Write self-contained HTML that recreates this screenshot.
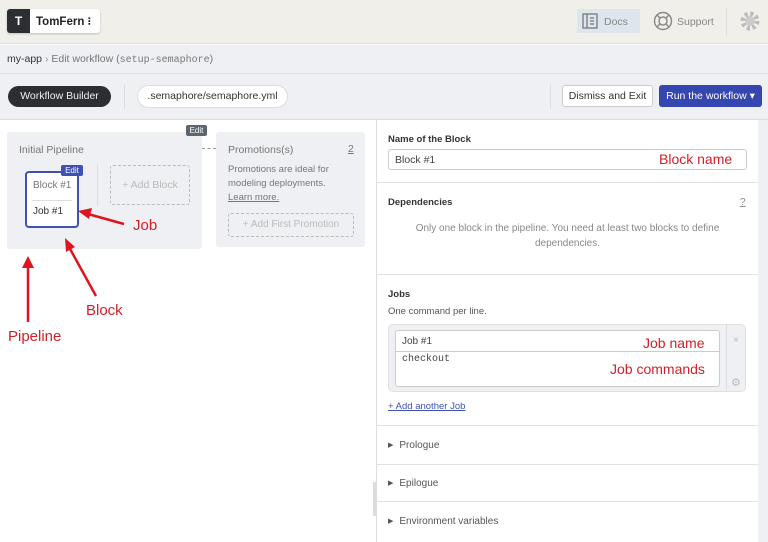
<!DOCTYPE html>
<html><head><style>
*{box-sizing:border-box;margin:0;padding:0}
body{width:768px;height:542px;overflow:hidden;font-family:"Liberation Sans",sans-serif;font-size:11px;color:#333;background:#fff;position:relative}
.a{position:absolute}
.red{color:#d32027;font-family:"Liberation Sans",sans-serif}
.sec{position:absolute;left:376px;width:382px;border-bottom:1px solid #e2e2e2}
.lbl{font-weight:bold;font-size:9.5px;color:#333}
.tri{font-size:7px;margin-right:6px;vertical-align:1px}
</style></head><body>
<div class="a" style="left:0;top:0;width:768px;height:44px;background:#f0efea;border-bottom:1px solid #dcdcdc"></div>
<div class="a" style="left:7px;top:9px;width:93px;height:24px;background:#fff;border-radius:3px;box-shadow:0 1px 2px rgba(0,0,0,.2);overflow:hidden">
 <div class="a" style="left:0;top:0;width:23px;height:24px;background:#2b2e33;color:#fff;font-weight:bold;font-size:12px;text-align:center;line-height:24px">T</div>
 <div class="a" style="left:29px;top:5px;font-weight:bold;font-size:11.5px;color:#222">TomFern ⁝</div>
</div>
<div class="a" style="left:577px;top:9px;width:63px;height:24px;background:#dce6ec"></div>
<svg class="a" style="left:581px;top:12px" width="18" height="18" viewBox="0 0 18 18" fill="none" stroke="#777" stroke-width="1.3"><rect x="2" y="2" width="14" height="14"/><line x1="6" y1="2" x2="6" y2="16"/><line x1="9" y1="6" x2="13" y2="6"/><line x1="9" y1="9" x2="13" y2="9"/><line x1="9" y1="12" x2="13" y2="12"/></svg>
<div class="a" style="left:604px;top:16px;color:#888;font-size:10.5px">Docs</div>
<svg class="a" style="left:653px;top:11px" width="20" height="20" viewBox="0 0 20 20" fill="none" stroke="#888" stroke-width="1.4"><circle cx="10" cy="10" r="8.5"/><circle cx="10" cy="10" r="4"/><line x1="4" y1="4" x2="7" y2="7"/><line x1="16" y1="4" x2="13" y2="7"/><line x1="4" y1="16" x2="7" y2="13"/><line x1="16" y1="16" x2="13" y2="13"/></svg>
<div class="a" style="left:677px;top:16px;color:#888;font-size:10.5px">Support</div>
<div class="a" style="left:726px;top:8px;width:1px;height:28px;background:#ddd"></div>
<svg class="a" style="left:738px;top:9px" width="24" height="24" viewBox="0 0 24 24"><circle cx="12" cy="12" r="7" fill="none" stroke="#bbb" stroke-width="5" stroke-dasharray="3 2.5"/><circle cx="12" cy="12" r="5" fill="#ccc"/></svg>
<div class="a" style="left:0;top:45px;width:768px;height:29px;background:#eef0f3;border-bottom:1px solid #dde"></div>
<div class="a" style="left:7px;top:53px;font-size:10.5px;color:#333">my-app <span style="color:#999">›</span> <span style="color:#777">Edit workflow (<span style="font-family:'Liberation Mono',monospace;font-size:10px">setup-semaphore</span>)</span></div>
<div class="a" style="left:0;top:74px;width:768px;height:46px;background:#eef0f3;border-bottom:1px solid #dcdcdc"></div>
<div class="a" style="left:8px;top:86px;width:103px;height:21px;background:#2b2f33;border-radius:11px;color:#eee;font-size:10.5px;text-align:center;line-height:21px">Workflow Builder</div>
<div class="a" style="left:124px;top:84px;width:1px;height:25px;background:#ddd"></div>
<div class="a" style="left:137px;top:85px;width:151px;height:23px;background:#fff;border:1px solid #ddd;border-radius:12px;font-size:10.5px;text-align:center;line-height:21px;color:#333">.semaphore/semaphore.yml</div>
<div class="a" style="left:550px;top:84px;width:1px;height:25px;background:#ddd"></div>
<div class="a" style="left:562px;top:85px;width:91px;height:22px;background:#fff;border:1px solid #ccc;border-radius:3px;font-size:10.5px;text-align:center;line-height:20px">Dismiss and Exit</div>
<div class="a" style="left:659px;top:85px;width:103px;height:22px;background:#3546b0;border-radius:3px;color:#fff;font-size:10.5px;text-align:center;line-height:22px">Run the workflow ▾</div>
<div class="a" style="left:7px;top:132px;width:195px;height:117px;background:#eef0f3;border-radius:3px"></div>
<div class="a" style="left:186px;top:125px;width:21px;height:11px;background:#5d666e;color:#fff;font-size:8px;text-align:center;line-height:11px;border-radius:2px">Edit</div>
<div class="a" style="left:19px;top:144px;color:#777;font-size:10.5px">Initial Pipeline</div>
<div class="a" style="left:25px;top:171px;width:54px;height:57px;background:#fff;border:2px solid #3f51b5;border-radius:4px">
 <div class="a" style="left:6px;top:7px;color:#777;font-size:10px">Block #1</div>
 <div class="a" style="left:5px;top:27px;width:40px;height:1px;background:#ddd"></div>
 <div class="a" style="left:6px;top:33px;color:#333;font-size:10px">Job #1</div>
</div>
<div class="a" style="left:61px;top:165px;width:22px;height:11px;background:#3f51b5;color:#fff;font-size:8px;text-align:center;line-height:11px;border-radius:2px">Edit</div>
<div class="a" style="left:97px;top:164px;width:1px;height:42px;background:#ddd"></div>
<div class="a" style="left:110px;top:165px;width:80px;height:40px;border:1px dashed #bbb;border-radius:3px;color:#bbb;font-size:10.5px;text-align:center;line-height:38px">+ Add Block</div>
<div class="a" style="left:202px;top:148px;width:14px;border-top:1px dashed #999"></div>
<div class="a" style="left:216px;top:132px;width:149px;height:115px;background:#eef0f3;border-radius:3px"></div>
<div class="a" style="left:228px;top:144px;color:#777;font-size:10.5px">Promotions(s)</div>
<div class="a" style="left:348px;top:143px;color:#777;font-size:10.5px;text-decoration:underline">2</div>
<div class="a" style="left:228px;top:163px;width:112px;color:#777;font-size:9.5px;line-height:14px">Promotions are ideal for modeling deployments.<br><span style="text-decoration:underline">Learn more.</span></div>
<div class="a" style="left:228px;top:213px;width:126px;height:24px;border:1px dashed #bbb;border-radius:3px;color:#bbb;font-size:10px;text-align:center;line-height:22px">+ Add First Promotion</div>
<svg class="a" style="left:0;top:0" width="376" height="542">
<g stroke="#e0141e" stroke-width="2.5" fill="#e0141e">
<line x1="124" y1="224" x2="88" y2="214"/><polygon points="78,211 92,208 89,219" stroke="none"/>
<line x1="96" y1="296" x2="69" y2="247"/><polygon points="65,238 75,247 66,252" stroke="none"/>
<line x1="28" y1="322" x2="28" y2="266"/><polygon points="28,256 34,268 22,268" stroke="none"/>
</g></svg>
<div class="a red" style="left:133px;top:217px;font-size:15px">Job</div>
<div class="a red" style="left:86px;top:302px;font-size:15px">Block</div>
<div class="a red" style="left:8px;top:328px;font-size:15px">Pipeline</div>
<div class="a" style="left:376px;top:120px;width:1px;height:422px;background:#ddd"></div>
<div class="a" style="left:758px;top:120px;width:10px;height:422px;background:#eef0f3"></div>
<div class="a" style="left:373px;top:482px;width:4px;height:34px;background:#ddd"></div>
<div class="sec" style="top:120px;height:63px">
 <div class="a lbl" style="left:12px;top:14px">Name of the Block</div>
 <div class="a" style="left:12px;top:29px;width:359px;height:21px;border:1px solid #ccc;border-radius:3px;font-size:10.5px;padding:4px 6px;color:#444">Block #1</div>
 <div class="a red" style="left:283px;top:31px;font-size:14px">Block name</div>
</div>
<div class="sec" style="top:183px;height:92px">
 <div class="a lbl" style="left:12px;top:14px">Dependencies</div>
 <div class="a" style="left:364px;top:14px;color:#888;text-decoration:underline;font-size:10px">?</div>
 <div class="a" style="left:32px;top:38px;width:319px;text-align:center;color:#888;font-size:10px;line-height:15px">Only one block in the pipeline. You need at least two blocks to define dependencies.</div>
</div>
<div class="sec" style="top:275px;height:151px">
 <div class="a lbl" style="left:12px;top:14px">Jobs</div>
 <div class="a" style="left:12px;top:31px;font-size:9.5px;color:#555">One command per line.</div>
 <div class="a" style="left:12px;top:49px;width:358px;height:68px;background:#eef0f3;border:1px solid #e0e0e0;border-radius:5px"></div>
 <div class="a" style="left:350px;top:49px;width:1px;height:68px;background:#ddd"></div>
 <div class="a" style="left:357px;top:60px;color:#bbb;font-size:10px">×</div>
 <div class="a" style="left:355px;top:101px;color:#bbb;font-size:11px">⚙</div>
 <div class="a" style="left:19px;top:55px;width:325px;height:57px;background:#fff;border:1px solid #ccc;border-radius:3px"></div>
 <div class="a" style="left:19px;top:76px;width:325px;height:1px;background:#ccc"></div>
 <div class="a" style="left:26px;top:61px;font-size:10px;color:#444">Job #1</div>
 <div class="a" style="left:26px;top:79px;font-size:10px;color:#444;font-family:'Liberation Mono',monospace">checkout</div>
 <div class="a red" style="left:267px;top:60px;font-size:14px">Job name</div>
 <div class="a red" style="left:234px;top:86px;font-size:14px">Job commands</div>
 <div class="a" style="left:12px;top:126px;font-size:9.5px;color:#3f51b5;text-decoration:underline">+ Add another Job</div>
</div>
<div class="sec" style="top:426px;height:39px"><div class="a" style="left:12px;top:14px;font-size:10px;color:#555"><span class="tri">▶</span>Prologue</div></div>
<div class="sec" style="top:465px;height:37px"><div class="a" style="left:12px;top:13px;font-size:10px;color:#555"><span class="tri">▶</span>Epilogue</div></div>
<div class="sec" style="top:502px;height:40px;border:none"><div class="a" style="left:12px;top:14px;font-size:10px;color:#555"><span class="tri">▶</span>Environment variables</div></div>
</body></html>
